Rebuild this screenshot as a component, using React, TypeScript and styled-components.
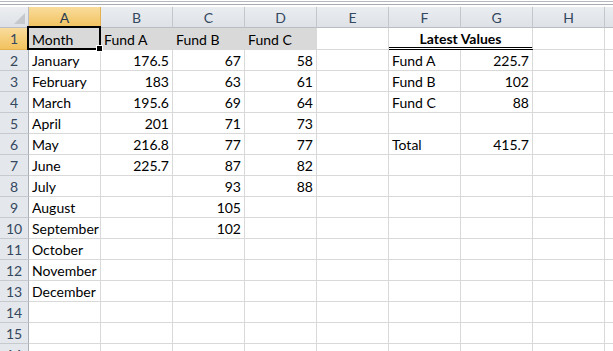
import React from 'react';
import styled, { createGlobalStyle } from 'styled-components';

const COLS = ['A', 'B', 'C', 'D', 'E', 'F', 'G', 'H'];
const ROW_COUNT = 16;

// cell values, keyed by row number then column letter
const DATA: Record<number, Record<string, string>> = {
  1: { A: 'Month', B: 'Fund A', C: 'Fund B', D: 'Fund C' },
  2: { A: 'January', B: '176.5', C: '67', D: '58', F: 'Fund A', G: '225.7' },
  3: { A: 'February', B: '183', C: '63', D: '61', F: 'Fund B', G: '102' },
  4: { A: 'March', B: '195.6', C: '69', D: '64', F: 'Fund C', G: '88' },
  5: { A: 'April', B: '201', C: '71', D: '73' },
  6: { A: 'May', B: '216.8', C: '77', D: '77', F: 'Total', G: '415.7' },
  7: { A: 'June', B: '225.7', C: '87', D: '82' },
  8: { A: 'July', C: '93', D: '88' },
  9: { A: 'August', C: '105' },
  10: { A: 'September', C: '102' },
  11: { A: 'October' },
  12: { A: 'November' },
  13: { A: 'December' },
};

const isNumber = (v?: string) => !!v && /^[0-9.]+$/.test(v);

const GlobalStyle = createGlobalStyle`
  html, body {
    margin: 0;
    padding: 0;
    background: #ffffff;
    overflow: hidden;
  }
  body {
    font-family: Lato, "Liberation Sans", sans-serif;
  }
`;

const Sheet = styled.div`
  display: grid;
  grid-template-columns: 29px repeat(8, 72px) 1fr;
  grid-template-rows: 7px 21px 22px repeat(${ROW_COUNT - 1}, 21px);
  width: 613px;
  height: 351px;
  overflow: hidden;
  font-size: 14px;
  color: #000;
`;

const TopEdge = styled.div`
  grid-column: 1 / -1;
  background: #ffffff;
  border-top: 1px solid #ffffff;
  box-shadow: inset 0 1px 0 #b4b7bb, inset 0 -2px 0 #ffffff, inset 0 -3px 0 #a9adb2;
`;

const Corner = styled.div`
  position: relative;
  background: linear-gradient(#eceef1, #dde1e6);
  border-right: 1px solid #b9bdc3;
  border-bottom: 1px solid #b9bdc3;

  &::after {
    content: '';
    position: absolute;
    right: 3px;
    bottom: 3px;
    border-left: 11px solid transparent;
    border-bottom: 11px solid #c5c9ce;
  }
`;

const ColHead = styled.div<{ $active?: boolean }>`
  display: flex;
  align-items: center;
  justify-content: center;
  padding-top: 1px;
  font-size: 14px;
  color: ${(p) => (p.$active ? '#2a3a4f' : '#34485f')};
  background: ${(p) =>
    p.$active
      ? 'linear-gradient(#f9dc9c, #f2c25e)'
      : 'linear-gradient(#eaedf0, #dee2e7)'};
  border-right: 1px solid ${(p) => (p.$active ? '#e3b14f' : '#c3c7cc')};
  border-bottom: 1px solid ${(p) => (p.$active ? '#e3a93c' : '#b9bdc3')};
`;

const RowHead = styled.div<{ $active?: boolean }>`
  display: flex;
  align-items: center;
  justify-content: center;
  font-size: 14px;
  color: #34485f;
  background: ${(p) =>
    p.$active ? 'linear-gradient(#f9dc9c, #f2c25e)' : '#e4e7eb'};
  border-right: 1px solid ${(p) => (p.$active ? '#e3a93c' : '#a9b0b8')};
  border-bottom: 1px solid ${(p) => (p.$active ? '#e3b14f' : '#c6cace')};
`;

const Cell = styled.div<{ $right?: boolean; $fill?: boolean }>`
  position: relative;
  display: flex;
  align-items: flex-end;
  justify-content: ${(p) => (p.$right ? 'flex-end' : 'flex-start')};
  padding: 0 3px 1px 3px;
  white-space: nowrap;
  background: ${(p) => (p.$fill ? '#d9d9d9' : '#ffffff')};
  border-right: 1px solid #d9d9d9;
  border-bottom: 1px solid #d9d9d9;
`;

const Merged = styled(Cell)`
  grid-column: span 2;
  justify-content: center;
  font-weight: 700;
  padding-bottom: 0;
  border-bottom: 3px double #000000;
`;

const Selection = styled.div`
  position: absolute;
  left: -2px;
  top: -2px;
  right: -1px;
  bottom: -1px;
  border: 2px solid #000000;
  pointer-events: none;
  z-index: 2;
`;

const FillHandle = styled.div`
  position: absolute;
  right: -4px;
  bottom: -4px;
  width: 5px;
  height: 5px;
  background: #000000;
  border: 1px solid #ffffff;
  z-index: 3;
`;

const Edge = styled.div<{ $head?: boolean }>`
  background: ${(p) => (p.$head ? 'linear-gradient(#eaedf0, #dee2e7)' : '#ffffff')};
  border-bottom: 1px solid ${(p) => (p.$head ? '#b9bdc3' : '#d9d9d9')};
`;

const App = () => {
  const rows = Array.from({ length: ROW_COUNT }, (_, i) => i + 1);

  return (
    <>
      <GlobalStyle />
      <Sheet>
        <TopEdge />
        <Corner />
        {COLS.map((c) => (
          <ColHead key={c} $active={c === 'A'}>
            {c}
          </ColHead>
        ))}
        <Edge $head />

        {rows.map((r) => {
          const data = DATA[r] || {};
          const cells: React.ReactNode[] = [];
          COLS.forEach((c) => {
            if (r === 1 && c === 'G') return;
            if (r === 1 && c === 'F') {
              cells.push(<Merged key={c}>Latest Values</Merged>);
              return;
            }
            const v = data[c];
            const fill = r === 1 && ['A', 'B', 'C', 'D'].includes(c);
            cells.push(
              <Cell key={c} $right={isNumber(v)} $fill={fill}>
                {v}
                {r === 1 && c === 'A' && (
                  <Selection>
                    <FillHandle />
                  </Selection>
                )}
              </Cell>
            );
          });
          return (
            <React.Fragment key={r}>
              <RowHead $active={r === 1}>{r}</RowHead>
              {cells}
              <Edge />
            </React.Fragment>
          );
        })}
      </Sheet>
    </>
  );
};

export default App;
